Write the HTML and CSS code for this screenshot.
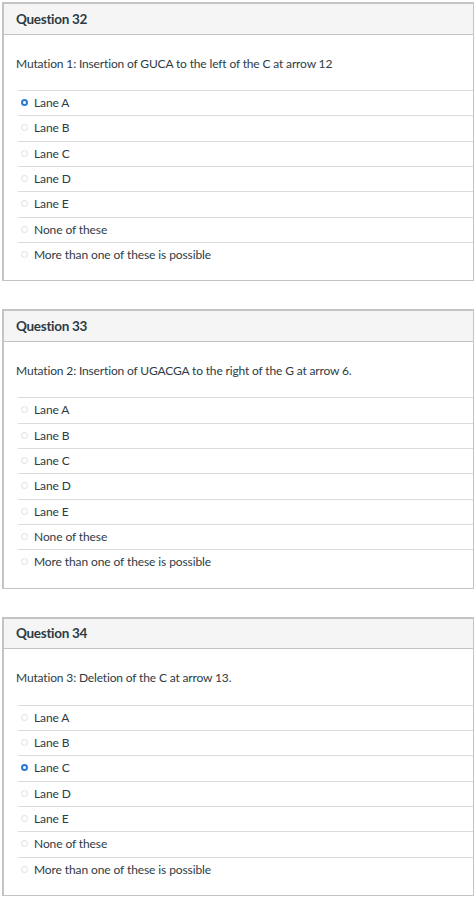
FILE: index.html
```html
<!DOCTYPE html>
<html lang="en">
<head>
    <meta charset="UTF-8">
    <meta name="viewport" content="width=device-width, initial-scale=1.0">
    <title>Quiz</title>
    <link rel="stylesheet" href="styles.css">
</head>
<body>
    <div class="question">
        <div class="question-header"><h2>Question 32</h2></div>
        <p class="question-text">Mutation 1: Insertion of GUCA to the left of the C at arrow 12</p>
        <div class="answers">
            <label class="answer"><span class="radio checked"></span>Lane A</label>
            <label class="answer"><span class="radio"></span>Lane B</label>
            <label class="answer"><span class="radio"></span>Lane C</label>
            <label class="answer"><span class="radio"></span>Lane D</label>
            <label class="answer"><span class="radio"></span>Lane E</label>
            <label class="answer"><span class="radio"></span>None of these</label>
            <label class="answer"><span class="radio"></span>More than one of these is possible</label>
        </div>
    </div>

    <div class="question">
        <div class="question-header"><h2>Question 33</h2></div>
        <p class="question-text">Mutation 2: Insertion of UGACGA to the right of the G at arrow 6.</p>
        <div class="answers">
            <label class="answer"><span class="radio"></span>Lane A</label>
            <label class="answer"><span class="radio"></span>Lane B</label>
            <label class="answer"><span class="radio"></span>Lane C</label>
            <label class="answer"><span class="radio"></span>Lane D</label>
            <label class="answer"><span class="radio"></span>Lane E</label>
            <label class="answer"><span class="radio"></span>None of these</label>
            <label class="answer"><span class="radio"></span>More than one of these is possible</label>
        </div>
    </div>

    <div class="question">
        <div class="question-header"><h2>Question 34</h2></div>
        <p class="question-text">Mutation 3: Deletion of the C at arrow 13.</p>
        <div class="answers">
            <label class="answer"><span class="radio"></span>Lane A</label>
            <label class="answer"><span class="radio"></span>Lane B</label>
            <label class="answer"><span class="radio checked"></span>Lane C</label>
            <label class="answer"><span class="radio"></span>Lane D</label>
            <label class="answer"><span class="radio"></span>Lane E</label>
            <label class="answer"><span class="radio"></span>None of these</label>
            <label class="answer"><span class="radio"></span>More than one of these is possible</label>
        </div>
    </div>
</body>
</html>
```

FILE: styles.css
```css
body {
    font-family: Lato, "Open Sans", sans-serif;
    color: #2d3b45;
    background-color: #fff;
    margin: 0;
    padding: 2px 0 0 2px;
}
.question {
    border: 1px solid #c4c4c4;
    border-left-width: 2px;
    border-top-width: 2px;
    margin-bottom: 28px;
}
.question-header {
    background-color: #f5f5f5;
    border-bottom: 1px solid #c4c4c4;
    height: 29.5px;
    display: flex;
    align-items: center;
    padding: 0 12px;
}
.question-header h2 {
    font-size: 13.5px;
    font-weight: bold;
    letter-spacing: -0.3px;
    margin: 0;
    color: #2d3b45;
}
.question-text {
    font-size: 12px;
    letter-spacing: -0.15px;
    margin: 0;
    padding: 0 12px;
    height: 55.5px;
    line-height: 58px;
}
.answers {
    margin-left: 14px;
    padding-bottom: 13px;
}
.answer {
    display: flex;
    align-items: center;
    box-sizing: border-box;
    border-top: 1px solid #dcdcdc;
    height: 25.33px;
    padding-bottom: 1px;
    font-size: 12px;
    letter-spacing: -0.1px;
}
.radio {
    width: 5px;
    height: 5px;
    border: 1px solid #dedede;
    border-radius: 50%;
    margin: 0 6px 0 3px;
}
.radio.checked {
    width: 3px;
    height: 3px;
    border: 2.5px solid #2b7bd6;
}
```
